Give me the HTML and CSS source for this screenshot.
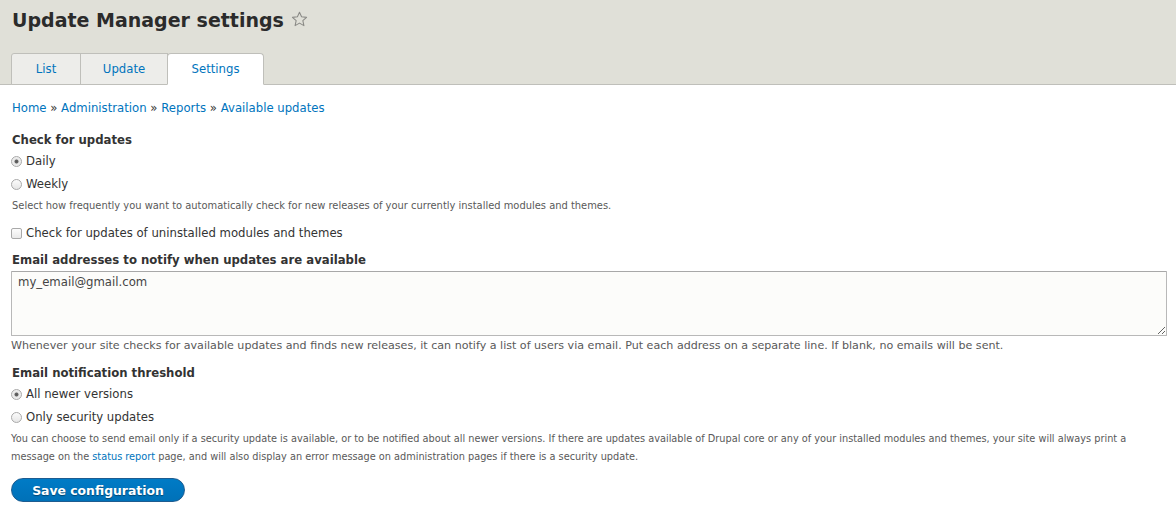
FILE: index.html
```html
<!DOCTYPE html>
<html lang="en">
<head>
<meta charset="utf-8">
<title>Update Manager settings</title>
<link rel="stylesheet" href="styles.css">
</head>
<body>
<header class="page-header">
  <h1 class="page-title">Update Manager settings
    <svg class="star" viewBox="0 0 16 16" width="17" height="17" aria-hidden="true"><path d="M8 1.2l1.95 4.3 4.7.5-3.5 3.15 1 4.6L8 11.4l-4.15 2.35 1-4.6L1.35 6l4.7-.5z" fill="none" stroke="#8a8a86" stroke-width="1" stroke-linejoin="round"/></svg>
  </h1>
  <nav class="tabs">
    <a class="tab tab-list" href="#">List</a>
    <a class="tab tab-update" href="#">Update</a>
    <a class="tab tab-settings active" href="#">Settings</a>
  </nav>
</header>
<main class="content">
  <div class="breadcrumb"><a href="#">Home</a> » <a href="#">Administration</a> » <a href="#">Reports</a> » <a href="#">Available updates</a></div>

  <div class="label first-label">Check for updates</div>
  <label class="option"><input type="radio" name="freq" checked><span>Daily</span></label>
  <label class="option second"><input type="radio" name="freq"><span>Weekly</span></label>
  <div class="description desc-freq">Select how frequently you want to automatically check for new releases of your currently installed modules and themes.</div>

  <label class="option check"><input type="checkbox"><span>Check for updates of uninstalled modules and themes</span></label>

  <div class="label email-label">Email addresses to notify when updates are available</div>
  <textarea class="emails">my_email@gmail.com</textarea>
  <div class="description desc-email">Whenever your site checks for available updates and finds new releases, it can notify a list of users via email. Put each address on a separate line. If blank, no emails will be sent.</div>

  <div class="label thr-label">Email notification threshold</div>
  <label class="option"><input type="radio" name="thr" checked><span>All newer versions</span></label>
  <label class="option second"><input type="radio" name="thr"><span>Only security updates</span></label>
  <div class="description desc-thr">You can choose to send email only if a security update is available, or to be notified about all newer versions. If there are updates available of Drupal core or any of your installed modules and themes, your site will always print a message on the <a href="#">status report</a> page, and will also display an error message on administration pages if there is a security update.</div>

  <button class="button-primary" type="button">Save configuration</button>
</main>
</body>
</html>
```

FILE: styles.css
```css
html, body {
  margin: 0;
  padding: 0;
  background: #fff;
}
body {
  font-family: "DejaVu Sans", Verdana, sans-serif;
  font-size: 11.7px;
  color: #333;
}
a {
  color: #0074bd;
  text-decoration: none;
}
.page-header {
  background: #e0e0d8;
  border-bottom: 1px solid #bfbfba;
  padding: 8px 0 0 0;
}
.page-title {
  margin: 0 0 0 12px;
  font-size: 19px;
  line-height: 24px;
  font-weight: bold;
  color: #2b2b2b;
  display: flex;
  align-items: center;
  gap: 7px;
}
.star {
  display: block;
  margin-top: -1px;
}
.tabs {
  display: flex;
  margin: 21px 0 -1px 11px;
}
.tab {
  display: block;
  box-sizing: border-box;
  height: 32px;
  line-height: 30px;
  text-align: center;
  border: 1px solid #bfbfba;
  background: #ededea;
  color: #0074bd;
  font-size: 11.7px;
}
.tab-list { width: 70px; }
.tab-update { width: 88px; }
.tab-settings { width: 97px; }
.tab + .tab {
  margin-left: -1px;
}
.tab:first-child {
  border-top-left-radius: 3px;
}
.tab.active {
  background: #fff;
  border-bottom-color: #fff;
  border-radius: 4px 4px 0 0;
}
.content {
  padding: 14px 9px 20px 11px;
}
.breadcrumb {
  line-height: 18px;
  padding-left: 1px;
  color: #333;
}
.label {
  font-weight: bold;
  line-height: 18px;
  padding-left: 1px;
}
.first-label { margin-top: 14px; }
.email-label { margin-top: 9px; }
.thr-label { margin-top: 9px; }

.option {
  display: flex;
  align-items: center;
  line-height: 18px;
  margin-top: 3px;
}
.option.second { margin-top: 5px; }
.option.check { margin-top: 9px; }
.option span { margin-left: 4px; }

.option input[type="radio"] {
  -webkit-appearance: none;
  appearance: none;
  width: 11px;
  height: 11px;
  margin: 0;
  border: 1px solid #a9a9a9;
  border-radius: 50%;
  background: linear-gradient(#fbfbfb, #e6e6e6);
  box-sizing: border-box;
  flex: none;
}
.option input[type="radio"]:checked {
  background: radial-gradient(circle, #555 0, #666 1.6px, #e8e8e8 2.4px, #f4f4f4 100%);
}
.option input[type="checkbox"] {
  -webkit-appearance: none;
  appearance: none;
  width: 11px;
  height: 11px;
  margin: 0;
  border: 1px solid #a9a9a9;
  border-radius: 2px;
  background: linear-gradient(#fcfcfc, #e9e9e9);
  box-sizing: border-box;
  flex: none;
}
.description {
  line-height: 18px;
  color: #595959;
  margin-top: 4px;
  padding-left: 1px;
}
.desc-freq { font-size: 9.92px; }
.desc-email { font-size: 11.1px; margin-top: 1px; padding-left: 0; }
.desc-thr { font-size: 9.75px; padding-left: 0; max-width: 1150px; }
.emails {
  display: block;
  box-sizing: border-box;
  width: 100%;
  height: 65px;
  margin: 2px 0 0 0;
  padding: 3px 6px;
  border: 1px solid #b8b8b8;
  border-top-color: #a8a8a8;
  border-radius: 1px;
  background: #fcfcfa;
  font-family: "DejaVu Sans", Verdana, sans-serif;
  font-size: 11.7px;
  line-height: 15px;
  color: #444;
  resize: both;
}
.button-primary {
  display: block;
  margin-top: 12px;
  width: 174px;
  height: 24px;
  padding: 0;
  border: 1px solid #1e5c90;
  border-radius: 20px;
  background: linear-gradient(#007bc6, #0071b8);
  color: #fff;
  font-family: "DejaVu Sans", Verdana, sans-serif;
  font-size: 12.4px;
  font-weight: bold;
  text-shadow: 0 1px 1px rgba(0,0,0,0.4);
  cursor: pointer;
}
```
